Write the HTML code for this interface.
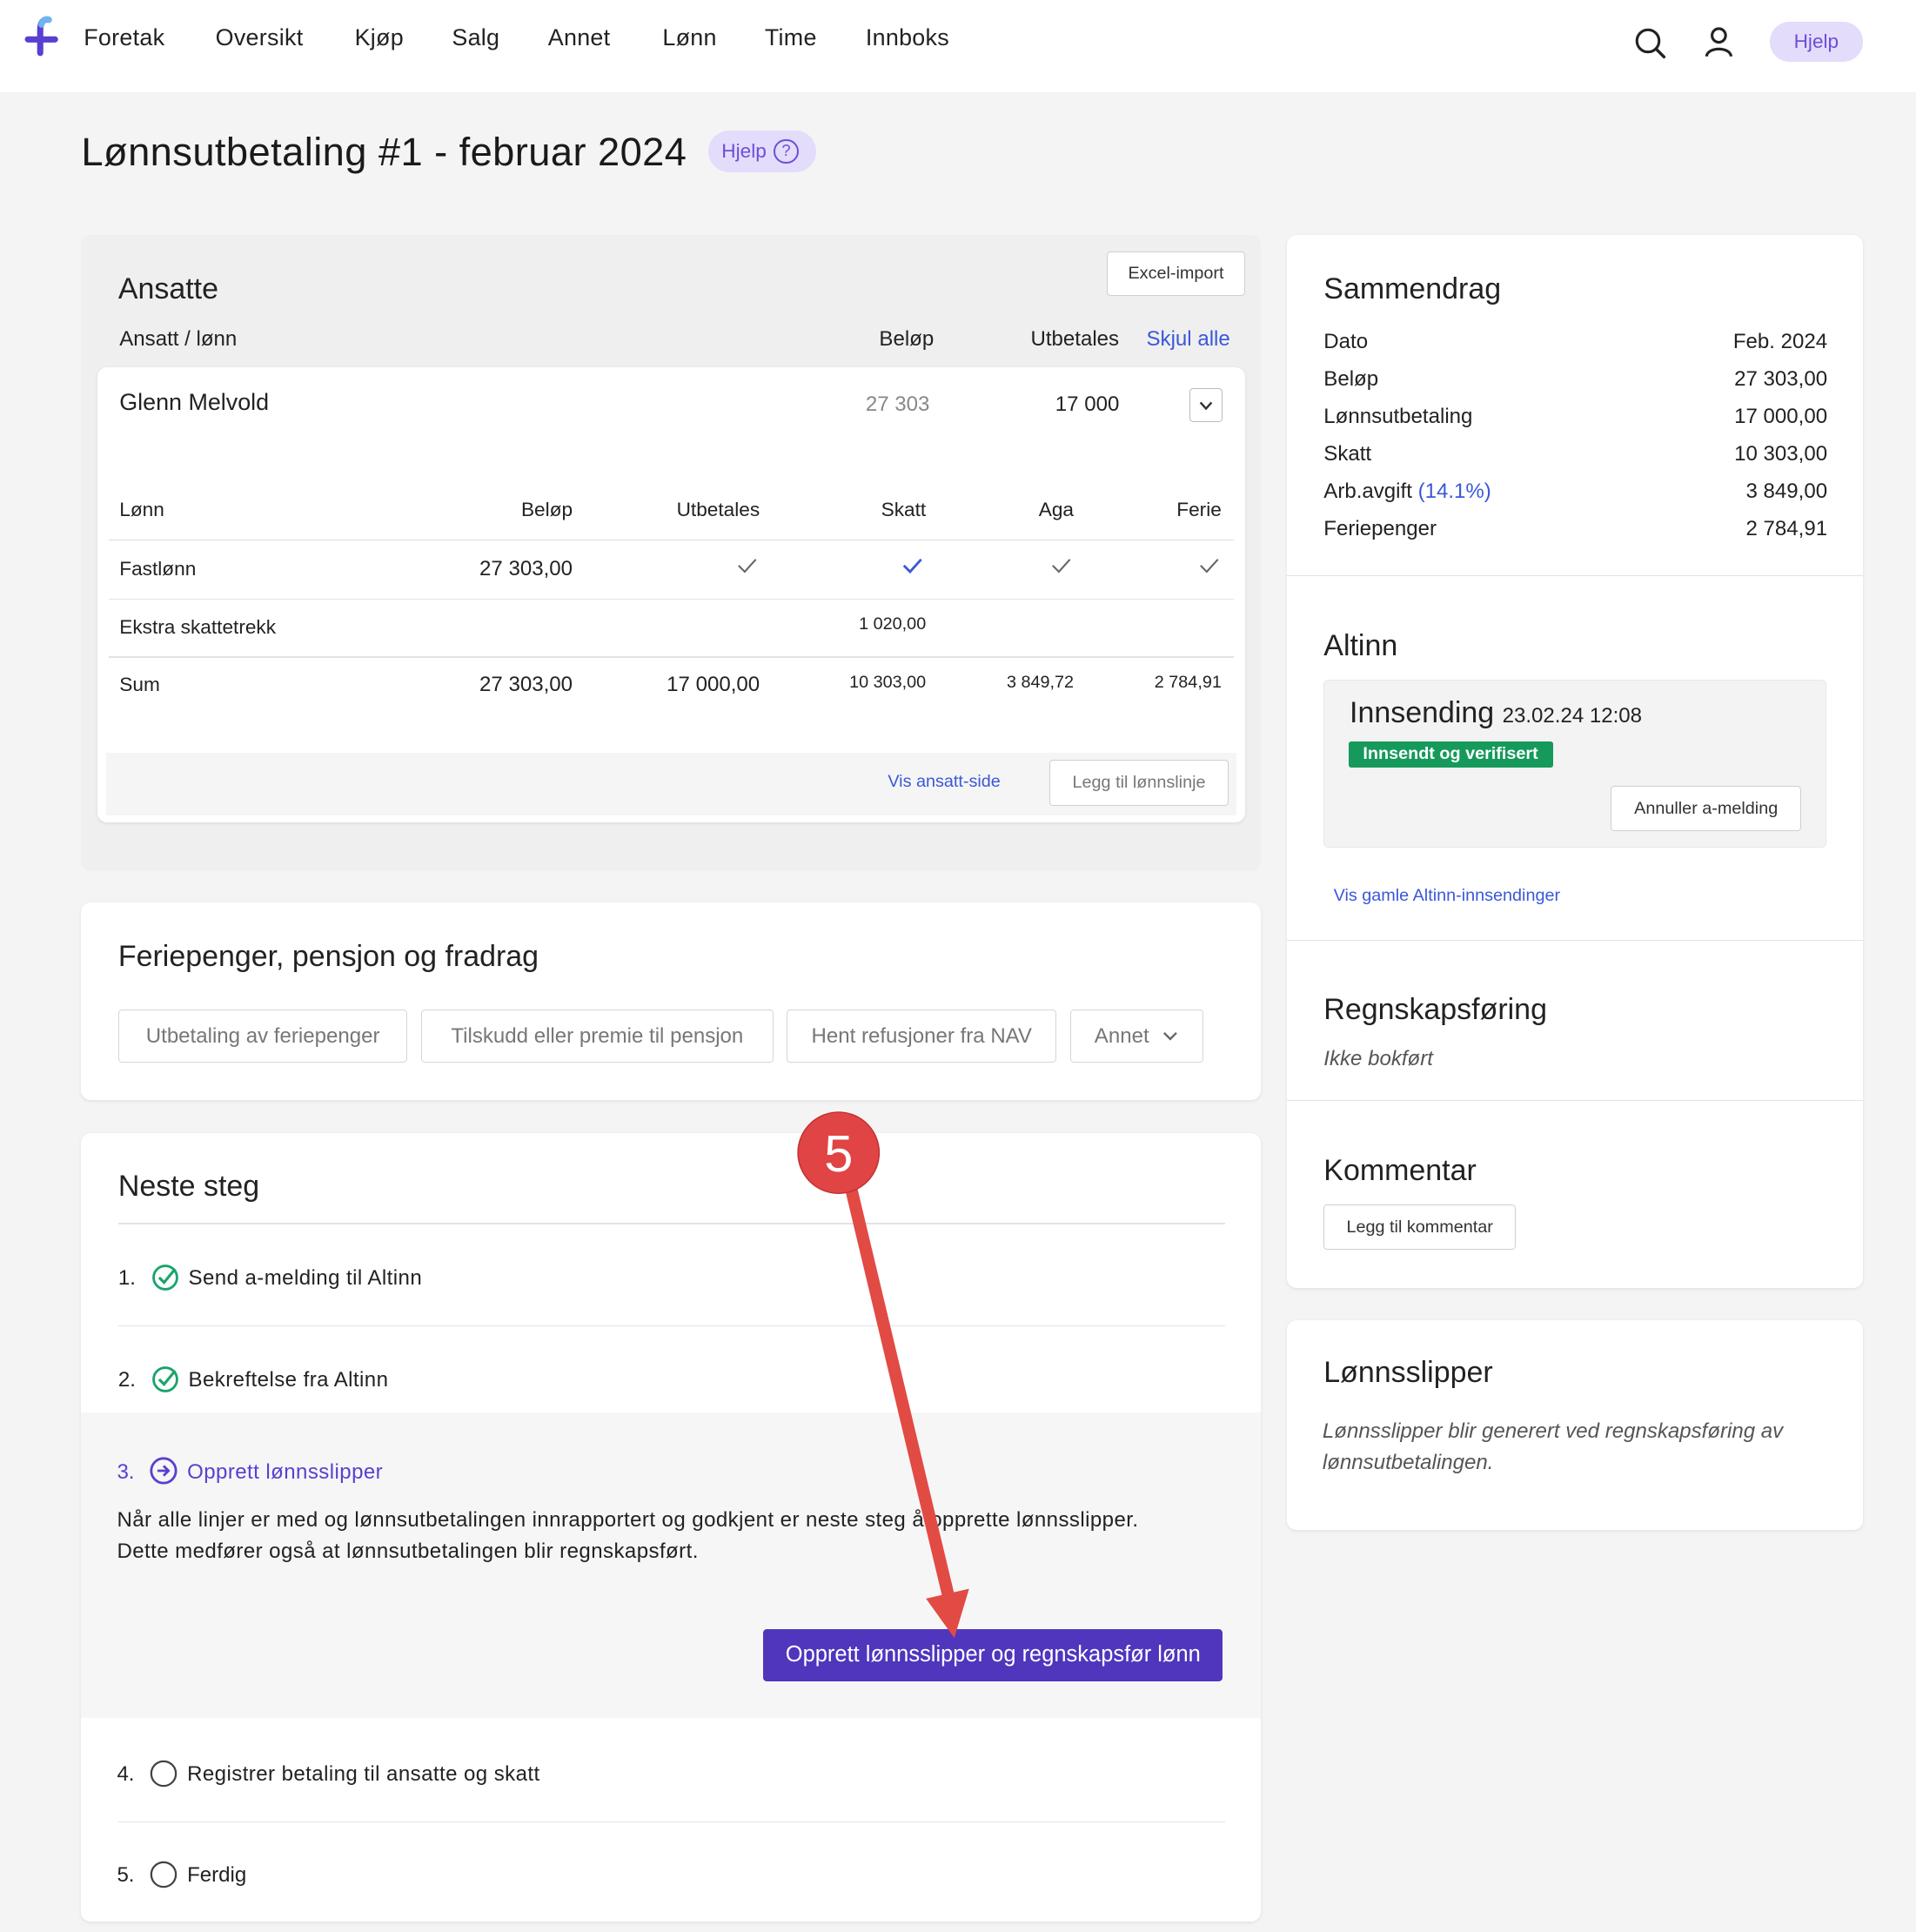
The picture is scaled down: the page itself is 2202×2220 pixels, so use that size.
<!DOCTYPE html>
<html><head><meta charset="utf-8"><style>
*{box-sizing:border-box;margin:0;padding:0}
html,body{width:2202px;height:2220px;overflow:hidden;background:#f4f4f4}
#r{zoom:1.41517;position:relative;width:1556px;height:1569px;font-family:"Liberation Sans",Arial,sans-serif;color:#222;background:#f4f4f4}
.a{position:absolute;white-space:nowrap}
.card{position:absolute;background:#fff;border-radius:8px;box-shadow:0 1px 3px rgba(0,0,0,.08)}
.btn{position:absolute;border:1px solid #cfcfcf;background:#fff;border-radius:3px;font-size:14px;color:#333;display:flex;align-items:center;justify-content:center}
.bt{position:absolute;border:1px solid #d6d6d6;border-radius:3px;color:#777;font-size:17px;display:flex;align-items:center;justify-content:center;background:#fff}
.h2{font-size:24px;color:#222}
.f17{font-size:17px}
.f16{font-size:16px}
.line{position:absolute;height:1px;background:#e3e3e3}
.r{text-align:right}
.nav{position:absolute;top:20px;font-size:19px;color:#222;letter-spacing:.2px}
</style></head><body><div id="r">
<div class="a" style="left:0;top:0;width:1556px;height:75px;background:#fff"></div>
<svg class="a" style="left:18px;top:12px" width="32" height="34" viewBox="0 0 32 34"><path d="M22 4 C17 3 15 7 15 12 L15 31" stroke="#5a3fd0" stroke-width="5" fill="none" stroke-linecap="round"/><path d="M22 4 C20 3 17 4 16 8" stroke="#6fb4f0" stroke-width="5" fill="none" stroke-linecap="round"/><path d="M5 20 L27 20" stroke="#5a3fd0" stroke-width="5" stroke-linecap="round"/></svg>
<div class="nav" style="left:68px">Foretak</div>
<div class="nav" style="left:175px">Oversikt</div>
<div class="nav" style="left:288px">Kjøp</div>
<div class="nav" style="left:367px">Salg</div>
<div class="nav" style="left:445px">Annet</div>
<div class="nav" style="left:538px">Lønn</div>
<div class="nav" style="left:621px">Time</div>
<div class="nav" style="left:703px">Innboks</div>
<svg class="a" style="left:1326px;top:21px" width="28" height="28" viewBox="0 0 28 28"><circle cx="12" cy="12" r="9" stroke="#222" stroke-width="2.2" fill="none"/><path d="M19 19 L25 25" stroke="#222" stroke-width="2.4" stroke-linecap="round"/></svg>
<svg class="a" style="left:1383px;top:20px" width="28" height="28" viewBox="0 0 28 28"><circle cx="13" cy="9" r="5.5" stroke="#222" stroke-width="2.2" fill="none"/><path d="M3 26 C4 18 22 18 23 26" stroke="#222" stroke-width="2.2" fill="none"/></svg>
<div class="a" style="left:1437px;top:18px;width:76px;height:32px;border-radius:16px;background:#e4dcfb;color:#6c4fd8;font-size:16px;display:flex;align-items:center;justify-content:center">Hjelp</div>

<div class="a" style="left:66px;top:105px;font-size:32px;color:#1a1a1a;letter-spacing:.3px">Lønnsutbetaling #1 - februar 2024</div>
<div class="a" style="left:575px;top:106px;width:88px;height:34px;border-radius:17px;background:#e4dcfb;color:#6c4fd8;font-size:16px;display:flex;align-items:center;padding-left:11px">Hjelp <span style="display:inline-block;width:20px;height:20px;border:2px solid #6c4fd8;border-radius:50%;font-size:13px;text-align:center;line-height:16px;margin-left:6px">?</span></div>

<!-- Ansatte -->
<div class="a" style="left:66px;top:191px;width:958px;height:516px;background:#efefef;border-radius:8px"></div>
<div class="a h2" style="left:96px;top:221px">Ansatte</div>
<div class="btn" style="left:899px;top:204px;width:112px;height:36px">Excel-import</div>
<div class="a f17" style="left:97px;top:266px">Ansatt / lønn</div>
<div class="a f17" style="left:714px;top:266px">Beløp</div>
<div class="a f17" style="left:837px;top:266px">Utbetales</div>
<div class="a f17" style="left:931px;top:266px;color:#3a58d8">Skjul alle</div>
<div class="card" style="left:79px;top:298px;width:932px;height:370px"></div>
<div class="a" style="left:97px;top:316px;font-size:19px">Glenn Melvold</div>
<div class="a f17" style="left:703px;top:319px;color:#888">27 303</div>
<div class="a f17" style="left:857px;top:319px">17 000</div>
<div class="a" style="left:966px;top:315px;width:27px;height:28px;border:1px solid #bbb;border-radius:3px"></div>
<svg class="a" style="left:971px;top:321px" width="17" height="17"><path d="M4 6 L8.5 11 L13 6" stroke="#333" stroke-width="1.7" fill="none"/></svg>
<div class="a f16" style="left:97px;top:405px">Lønn</div>
<div class="a f16 r" style="left:365px;width:100px;top:405px">Beløp</div>
<div class="a f16 r" style="left:517px;width:100px;top:405px">Utbetales</div>
<div class="a f16 r" style="left:652px;width:100px;top:405px">Skatt</div>
<div class="a f16 r" style="left:772px;width:100px;top:405px">Aga</div>
<div class="a f16 r" style="left:892px;width:100px;top:405px">Ferie</div>
<div class="line" style="left:88px;top:438px;width:914px;background:#ddd"></div>
<div class="a f16" style="left:97px;top:453px">Fastlønn</div>
<div class="a f17 r" style="left:345px;width:120px;top:452px">27 303,00</div>
<svg class="a" style="left:598px;top:452px" width="18" height="14"><path d="M2 7 L7 12 L16 2" stroke="#666" stroke-width="1.5" fill="none"/></svg>
<svg class="a" style="left:732px;top:452px" width="18" height="14"><path d="M2 7 L7 12 L16 2" stroke="#3a58d8" stroke-width="2" fill="none"/></svg>
<svg class="a" style="left:853px;top:452px" width="18" height="14"><path d="M2 7 L7 12 L16 2" stroke="#666" stroke-width="1.5" fill="none"/></svg>
<svg class="a" style="left:973px;top:452px" width="18" height="14"><path d="M2 7 L7 12 L16 2" stroke="#666" stroke-width="1.5" fill="none"/></svg>
<div class="line" style="left:88px;top:486px;width:914px"></div>
<div class="a f16" style="left:97px;top:500px">Ekstra skattetrekk</div>
<div class="a r" style="left:652px;width:100px;top:499px;font-size:14px">1 020,00</div>
<div class="line" style="left:88px;top:533px;width:914px"></div>
<div class="a f16" style="left:97px;top:547px">Sum</div>
<div class="a f17 r" style="left:345px;width:120px;top:546px">27 303,00</div>
<div class="a f17 r" style="left:497px;width:120px;top:546px">17 000,00</div>
<div class="a r" style="left:652px;width:100px;top:546px;font-size:14px">10 303,00</div>
<div class="a r" style="left:772px;width:100px;top:546px;font-size:14px">3 849,72</div>
<div class="a r" style="left:892px;width:100px;top:546px;font-size:14px">2 784,91</div>
<div class="a" style="left:86px;top:611px;width:918px;height:51px;background:#f5f5f5"></div>
<div class="a" style="left:721px;top:627px;font-size:14px;color:#3a58d8">Vis ansatt-side</div>
<div class="btn" style="left:852px;top:617px;width:146px;height:37px;color:#777">Legg til lønnslinje</div>

<!-- Feriepenger -->
<div class="card" style="left:66px;top:733px;width:958px;height:160px"></div>
<div class="a h2" style="left:96px;top:763px">Feriepenger, pensjon og fradrag</div>
<div class="bt" style="left:96px;top:820px;width:235px;height:43px">Utbetaling av feriepenger</div>
<div class="bt" style="left:342px;top:820px;width:286px;height:43px">Tilskudd eller premie til pensjon</div>
<div class="bt" style="left:639px;top:820px;width:219px;height:43px">Hent refusjoner fra NAV</div>
<div class="bt" style="left:869px;top:820px;width:108px;height:43px">Annet <svg style="margin-left:10px" width="14" height="10"><path d="M2 2 L7 7 L12 2" stroke="#666" stroke-width="1.7" fill="none"/></svg></div>

<!-- Neste steg -->
<div class="card" style="left:66px;top:920px;width:958px;height:640px;overflow:hidden"><div style="position:absolute;left:0;top:227px;width:958px;height:248px;background:#f6f6f6"></div></div>
<div class="a h2" style="left:96px;top:950px">Neste steg</div>
<div class="line" style="left:96px;top:993px;width:899px"></div>
<div class="a f17" style="left:96px;top:1028px">1.</div>
<svg class="a" style="left:122px;top:1025px" width="24" height="24"><circle cx="12" cy="12" r="9.5" stroke="#1aa46a" stroke-width="2" fill="none"/><path d="M7 12 L11 16 L20 5" stroke="#1aa46a" stroke-width="2.2" fill="none"/></svg>
<div class="a f17" style="left:153px;top:1028px;letter-spacing:.3px">Send a-melding til Altinn</div>
<div class="line" style="left:96px;top:1076px;width:899px"></div>
<div class="a f17" style="left:96px;top:1111px">2.</div>
<svg class="a" style="left:122px;top:1108px" width="24" height="24"><circle cx="12" cy="12" r="9.5" stroke="#1aa46a" stroke-width="2" fill="none"/><path d="M7 12 L11 16 L20 5" stroke="#1aa46a" stroke-width="2.2" fill="none"/></svg>
<div class="a f17" style="left:153px;top:1111px;letter-spacing:.3px">Bekreftelse fra Altinn</div>
<div class="a f17" style="left:95px;top:1186px;color:#5b3fd0">3.</div>
<svg class="a" style="left:121px;top:1182px" width="24" height="24"><circle cx="12" cy="12" r="10" stroke="#5b3fd0" stroke-width="2" fill="none"/><path d="M7 12 L16 12 M12 8 L16 12 L12 16" stroke="#5b3fd0" stroke-width="2" fill="none"/></svg>
<div class="a f17" style="left:152px;top:1186px;color:#5b3fd0;letter-spacing:.3px">Opprett lønnsslipper</div>
<div class="a f17" style="left:95px;top:1222px;line-height:25px;letter-spacing:.3px">Når alle linjer er med og lønnsutbetalingen innrapportert og godkjent er neste steg å opprette lønnsslipper.<br>Dette medfører også at lønnsutbetalingen blir regnskapsført.</div>
<div class="a" style="left:620px;top:1323px;width:373px;height:42px;background:#5035bd;border-radius:3px;color:#fff;font-size:18px;display:flex;align-items:center;justify-content:center">Opprett lønnsslipper og regnskapsfør lønn</div>
<div class="a f17" style="left:95px;top:1431px">4.</div>
<svg class="a" style="left:121px;top:1428px" width="24" height="24"><circle cx="12" cy="12" r="10" stroke="#444" stroke-width="1.6" fill="none"/></svg>
<div class="a f17" style="left:152px;top:1431px;letter-spacing:.3px">Registrer betaling til ansatte og skatt</div>
<div class="line" style="left:96px;top:1479px;width:899px"></div>
<div class="a f17" style="left:95px;top:1513px">5.</div>
<svg class="a" style="left:121px;top:1510px" width="24" height="24"><circle cx="12" cy="12" r="10" stroke="#444" stroke-width="1.6" fill="none"/></svg>
<div class="a f17" style="left:152px;top:1513px">Ferdig</div>

<!-- Right -->
<div class="card" style="left:1045px;top:191px;width:468px;height:855px"></div>
<div class="a h2" style="left:1075px;top:221px">Sammendrag</div>
<div class="a f17" style="left:1075px;top:262px;line-height:30.4px">Dato<br>Beløp<br>Lønnsutbetaling<br>Skatt<br>Arb.avgift <span style="color:#3a58d8">(14.1%)</span><br>Feriepenger</div>
<div class="a f17 r" style="left:1300px;width:184px;top:262px;line-height:30.4px">Feb. 2024<br>27 303,00<br>17 000,00<br>10 303,00<br>3 849,00<br>2 784,91</div>
<div class="line" style="left:1045px;top:467px;width:468px"></div>
<div class="a h2" style="left:1075px;top:511px">Altinn</div>
<div class="a" style="left:1075px;top:552px;width:408px;height:136px;background:#f3f3f3;border-radius:4px;border:1px solid #e8e8e8"></div>
<div class="a" style="left:1096px;top:565px;font-size:24px">Innsending <span style="font-size:17px">23.02.24 12:08</span></div>
<div class="a" style="left:1095px;top:602px;width:166px;height:21px;background:#159a5c;color:#fff;font-size:14px;font-weight:bold;display:flex;align-items:center;justify-content:center;border-radius:2px">Innsendt og verifisert</div>
<div class="btn" style="left:1308px;top:638px;width:155px;height:37px">Annuller a-melding</div>
<div class="a" style="left:1083px;top:719px;font-size:14px;color:#3a58d8">Vis gamle Altinn-innsendinger</div>
<div class="line" style="left:1045px;top:763px;width:468px"></div>
<div class="a h2" style="left:1075px;top:806px">Regnskapsføring</div>
<div class="a f17" style="left:1075px;top:850px;font-style:italic;color:#555">Ikke bokført</div>
<div class="line" style="left:1045px;top:893px;width:468px"></div>
<div class="a h2" style="left:1075px;top:937px">Kommentar</div>
<div class="btn" style="left:1075px;top:978px;width:156px;height:37px">Legg til kommentar</div>

<div class="card" style="left:1045px;top:1072px;width:468px;height:170px"></div>
<div class="a h2" style="left:1075px;top:1101px">Lønnsslipper</div>
<div class="a f17" style="left:1074px;top:1150px;font-style:italic;color:#555;line-height:25px">Lønnsslipper blir generert ved regnskapsføring av<br>lønnsutbetalingen.</div>

<!-- annotation -->
<svg class="a" style="left:0;top:0" width="1556" height="1569">
<line x1="690" y1="960" x2="770" y2="1295" stroke="#e24a44" stroke-width="10"/>
<polygon points="752,1298 787,1290 775,1330" fill="#e24a44"/>
<circle cx="681" cy="936" r="33" fill="#e04444" stroke="#c03030" stroke-width="1"/>
<text x="681" y="951" text-anchor="middle" font-family="Liberation Sans" font-size="42" fill="#fff">5</text>
</svg>
</div></body></html>
